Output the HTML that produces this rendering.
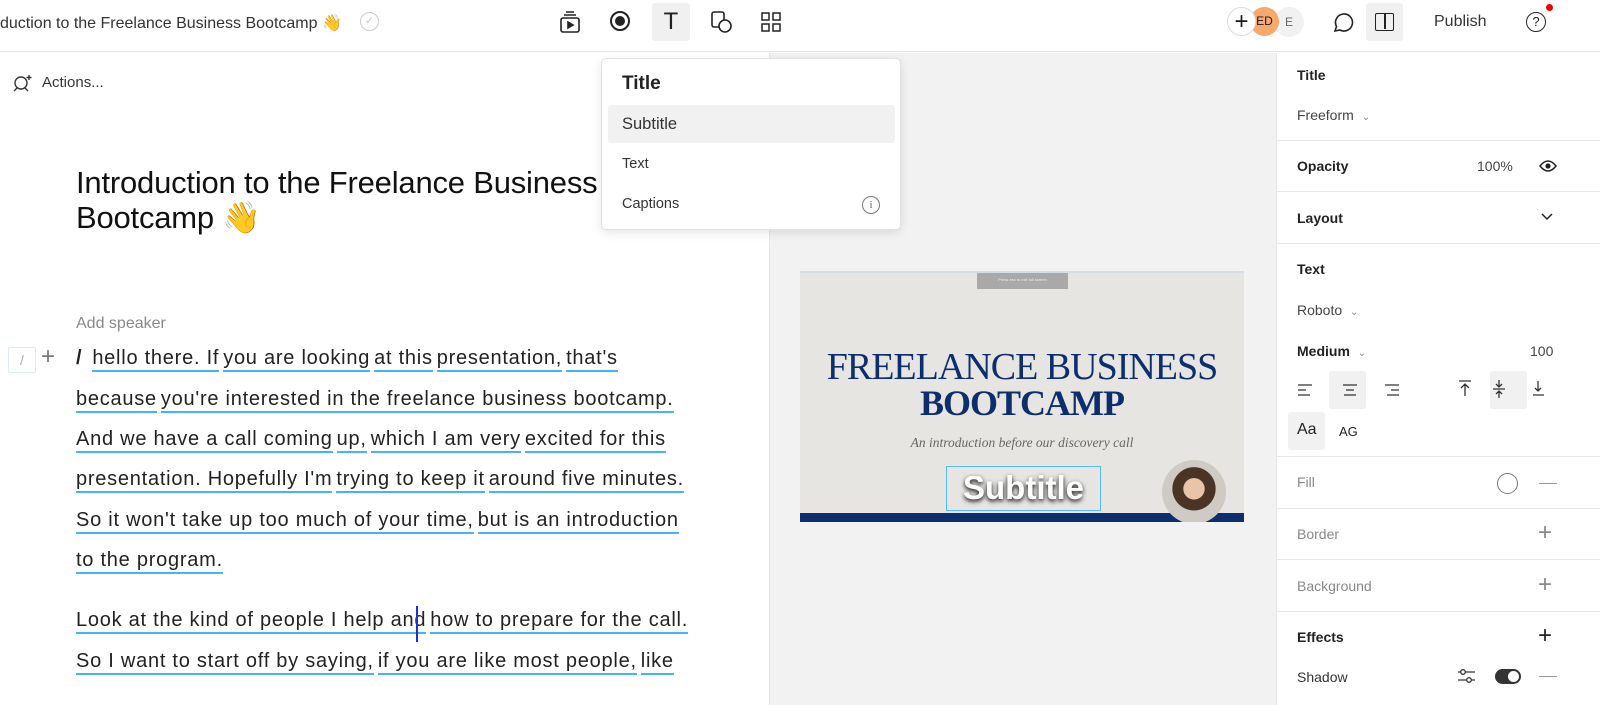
<!DOCTYPE html>
<html><head><meta charset="utf-8"><style>
*{box-sizing:border-box;margin:0;padding:0}
body{width:1600px;height:705px;overflow:hidden;background:#fff;font-family:"Liberation Sans",sans-serif;color:#1a1a1a;position:relative}
.a{position:absolute}
.top{left:0;top:0;width:1600px;height:52px;border-bottom:1px solid #e3e3e3;background:#fff}
.line{position:absolute;left:76px;font-size:20px;letter-spacing:0.75px;color:#222;white-space:nowrap}
.line span{border-bottom:2px solid #45b3f5;padding-bottom:1px;margin-right:4px}
.rp{left:1276px;top:53px;width:324px;height:652px;border-left:1px solid #e5e5e5;background:#fff}
.sec{position:absolute;left:0;width:324px;border-top:1px solid #e8e8e8}
.lbl{position:absolute;left:20px;font-size:14px}
.b{font-weight:bold;color:#222}
.g{color:#888}
</style></head><body>
<div class="a top">
 <div class="a" style="left:0;top:13px;font-size:16px;color:#333;white-space:nowrap">duction to the Freelance Business Bootcamp 👋</div>
 <div class="a" style="left:360px;top:12px;width:19px;height:19px;border:1.5px solid #ccc;border-radius:50%;color:#ccc;font-size:11px;text-align:center;line-height:16px">✓</div>
 <svg class="a" style="left:559px;top:10px" width="22" height="24" viewBox="0 0 22 24" fill="none" stroke="#222" stroke-width="1.6"><path d="M7 2h8M5 5h12"/><rect x="2" y="8" width="18" height="14" rx="2"/><path d="M9 12l5 3-5 3z" fill="#222"/></svg>
 <div class="a" style="left:610px;top:11px;width:20px;height:20px;border:2px solid #222;border-radius:50%"><div style="margin:3px;width:10px;height:10px;background:#222;border-radius:50%"></div></div>
 <div class="a" style="left:652px;top:3px;width:38px;height:38px;background:#f0f0f0;border-radius:3px;font-size:24px;text-align:center;line-height:38px;color:#222;font-weight:300">T</div>
 <svg class="a" style="left:710px;top:10px" width="24" height="24" viewBox="0 0 24 24" fill="none" stroke="#222" stroke-width="1.6"><rect x="2" y="2" width="12" height="15" rx="2"/><circle cx="15" cy="16" r="6" fill="#fff"/></svg>
 <svg class="a" style="left:761px;top:12px" width="20" height="20" viewBox="0 0 20 20" fill="none" stroke="#222" stroke-width="1.5"><rect x="1" y="1" width="7" height="7"/><rect x="12" y="1" width="7" height="7"/><rect x="1" y="12" width="7" height="7"/><rect x="12" y="12" width="7" height="7"/></svg>
 <div class="a" style="left:1227px;top:7px;width:29px;height:29px;border:1px solid #ddd;border-radius:50%;background:#fff;font-size:24px;text-align:center;line-height:27px;z-index:3">+</div>
 <div class="a" style="left:1250px;top:7px;width:29px;height:29px;border-radius:50%;background:#f7a86a;font-size:12px;text-align:center;line-height:29px;z-index:2">ED</div>
 <div class="a" style="left:1274px;top:7px;width:30px;height:30px;border-radius:50%;background:#f1f1f1;font-size:12px;color:#666;text-align:center;line-height:30px">E</div>
 <svg class="a" style="left:1332px;top:11px" width="22" height="22" viewBox="0 0 22 22" fill="none" stroke="#222" stroke-width="1.6"><path d="M3 20l1.5-4.5A8.5 8.5 0 1 1 8 19z"/></svg>
 <div class="a" style="left:1366px;top:3px;width:37px;height:38px;background:#f0f0f0;border-radius:3px"><div style="margin:10px 9px;width:19px;height:18px;border:1.7px solid #222;border-radius:2px;position:relative"><div style="position:absolute;left:8px;top:0;width:1.7px;height:15px;background:#222"></div></div></div>
 <div class="a" style="left:1434px;top:13px;font-size:16px;color:#333">Publish</div>
 <div class="a" style="left:1526px;top:12px;width:20px;height:20px;border:1.6px solid #222;border-radius:50%;font-size:13px;text-align:center;line-height:17px">?</div>
 <div class="a" style="left:1546px;top:4px;width:7px;height:7px;background:#e00;border-radius:50%"></div>
</div>

<svg class="a" style="left:12px;top:73px" width="22" height="20" viewBox="0 0 22 20" fill="none" stroke="#333" stroke-width="1.4"><circle cx="9" cy="10" r="6"/><path d="M5 15l-3 3M13 15l3 3M17 2v5M14.5 4.5h5"/></svg>
<div class="a" style="left:42px;top:74px;font-size:15px;color:#333">Actions...</div>
<div class="a" style="left:76px;top:165px;font-size:31px;line-height:35px;color:#111;letter-spacing:-0.2px;white-space:nowrap">Introduction to the Freelance Business<br>Bootcamp 👋</div>
<div class="a" style="left:76px;top:315px;font-size:16px;color:#888">Add speaker</div>
<div class="a" style="left:8px;top:347px;width:28px;height:26px;border:1px solid #d8ecfa;border-radius:2px;color:#aaa;text-align:center;line-height:24px;font-size:14px">/</div>
<div class="a" style="left:41px;top:343px;font-size:24px;color:#777;font-weight:300">+</div>
<div class="line" style="top:347px"><b style="margin-right:10px">/</b><span>hello there. If</span><span>you are looking</span><span>at this</span><span>presentation,</span><span>that's</span></div>
<div class="line" style="top:388px"><span>because</span><span>you're interested in the freelance business bootcamp.</span></div>
<div class="line" style="top:428px"><span>And we have a call coming</span><span>up,</span><span>which I am very</span><span>excited for this</span></div>
<div class="line" style="top:468px"><span>presentation. Hopefully I'm</span><span>trying to keep it</span><span>around five minutes.</span></div>
<div class="line" style="top:509px"><span>So it won't take up too much of your time,</span><span>but is an introduction</span></div>
<div class="line" style="top:549px"><span>to the program.</span></div>
<div class="line" style="top:609px"><span>Look at the kind of people I help and</span><span>how to prepare for the call.</span></div>
<div class="a" style="left:416px;top:606px;width:2px;height:36px;background:#1c2fd0"></div>
<div class="line" style="top:650px"><span>So I want to start off by saying,</span><span>if you are like most people,</span><span>like</span></div>

<div class="a" style="left:769px;top:53px;width:507px;height:652px;background:#f2f2f2;border-left:1px solid #e5e5e5"></div>
<div class="a" style="left:800px;top:271px;width:444px;height:251px;background:#e6e5e2;overflow:hidden;border-top:2px solid #d6dde3">
 <div class="a" style="left:177px;top:0;width:91px;height:16px;background:#a9a9a9;font-size:4px;color:#eee;text-align:center;line-height:14px">Press esc to exit full screen</div>
 <div class="a" style="left:0;top:76px;width:444px;text-align:center;font-family:'Liberation Serif',serif;color:#0d2e6e;font-size:38px;line-height:36px;letter-spacing:-1px">FREELANCE BUSINESS<br><b style="font-size:36px">BOOTCAMP</b></div>
 <div class="a" style="left:0;top:162px;width:444px;text-align:center;font-family:'Liberation Serif',serif;font-style:italic;color:#666;font-size:13.5px">An introduction before our discovery call</div>
 <div class="a" style="left:146px;top:193px;width:155px;height:45px;border:1.5px solid #57baf7;text-align:center;color:#fff;font-size:33px;font-weight:bold;line-height:42px;text-shadow:0 2px 5px #000">Subtitle</div>
 <div class="a" style="left:0;top:240px;width:444px;height:11px;background:#0d2e6e"></div>
 <div class="a" style="left:362px;top:187px;width:64px;height:64px;border-radius:50%;background:radial-gradient(circle at 50% 45%,#e9c4a9 0 22%,#4a3426 23% 45%,#cfcac3 46%)"></div>
</div>

<div class="a" style="left:601px;top:58px;width:300px;height:172px;background:#fff;border:1px solid #e2e2e2;border-radius:5px;box-shadow:0 3px 10px rgba(0,0,0,.1)">
 <div class="a" style="left:20px;top:14px;font-size:19px;font-weight:bold;color:#222">Title</div>
 <div class="a" style="left:6px;top:46px;width:287px;height:38px;background:#f1f1f1;border-radius:3px"></div>
 <div class="a" style="left:20px;top:56px;font-size:16.5px;color:#333">Subtitle</div>
 <div class="a" style="left:20px;top:97px;font-size:14.5px;color:#333">Text</div>
 <div class="a" style="left:20px;top:137px;font-size:14.5px;color:#333">Captions</div>
 <div class="a" style="left:260px;top:137px;width:18px;height:18px;border:1px solid #777;border-radius:50%;font-size:11px;text-align:center;line-height:16px;color:#666;font-family:'Liberation Serif',serif">i</div>
</div>

<div class="a rp">
 <div class="lbl b" style="top:14px">Title</div>
 <div class="lbl" style="top:54px;color:#444">Freeform <span style="color:#888;font-size:10px;margin-left:4px">⌄</span></div>
 <div class="sec" style="top:87px"></div>
 <div class="lbl b" style="top:105px">Opacity</div>
 <div class="a" style="left:200px;top:105px;font-size:14px;color:#444">100%</div>
 <svg class="a" style="left:262px;top:106px" width="18" height="14" viewBox="0 0 18 14"><path d="M1 7Q9-3 17 7Q9 17 1 7z" fill="none" stroke="#222" stroke-width="1.5"/><circle cx="9" cy="7" r="2.6" fill="#222"/></svg>
 <div class="sec" style="top:138px"></div>
 <div class="lbl b" style="top:157px">Layout</div>
 <svg class="a" style="left:264px;top:160px" width="12" height="8" viewBox="0 0 12 8" fill="none" stroke="#222" stroke-width="1.5"><path d="M1 1l5 5 5-5"/></svg>
 <div class="sec" style="top:190px"></div>
 <div class="lbl b" style="top:208px">Text</div>
 <div class="lbl" style="top:249px;color:#444">Roboto <span style="color:#888;font-size:10px;margin-left:4px">⌄</span></div>
 <div class="lbl b" style="top:290px">Medium <span style="color:#888;font-size:10px;margin-left:4px;font-weight:normal">⌄</span></div>
 <div class="a" style="left:253px;top:290px;font-size:14px;color:#444">100</div>
 <div class="a" style="left:52px;top:318px;width:37px;height:38px;background:#f1f1f1;border-radius:3px"></div>
 <div class="a" style="left:213px;top:318px;width:37px;height:38px;background:#f1f1f1;border-radius:3px"></div>
 <div class="a" style="left:11px;top:359px;width:37px;height:38px;background:#f1f1f1;border-radius:3px"></div>
 <svg class="a" style="left:20px;top:330px;" width="120" height="14" viewBox="0 0 120 14" fill="none" stroke="#333" stroke-width="1.3"><path d="M1 2h14M1 7h8M1 12h12M46 2h14M49 7h8M47 12h12M88 2h14M94 7h8M90 12h12"/></svg>
 <svg class="a" style="left:180px;top:326px;" width="100" height="20" viewBox="0 0 100 20" fill="none" stroke="#333" stroke-width="1.3"><path d="M2 2h12M8 5v12M4 9l4-4 4 4M42 1v7M39 5l3 3 3-3M36 10h12M42 19v-7M39 15l3-3 3 3M81 2v10M78 9l3 3 3-3M76 16h11"/></svg>
 <div class="a" style="left:20px;top:368px;font-size:16px;color:#222">Aa</div>
 <div class="a" style="left:62px;top:371px;font-size:13px;color:#222">AG</div>
 <div class="sec" style="top:403px"></div>
 <div class="lbl g" style="top:421px">Fill</div>
 <div class="a" style="left:220px;top:420px;width:21px;height:21px;border:1.3px solid #777;border-radius:50%"></div>
 <div class="a" style="left:262px;top:430px;width:18px;height:1.3px;background:#999"></div>
 <div class="sec" style="top:455px"></div>
 <div class="lbl g" style="top:473px">Border</div>
 <div class="a" style="left:261px;top:466px;font-size:24px;color:#888;font-weight:300">+</div>
 <div class="sec" style="top:506px"></div>
 <div class="lbl g" style="top:525px">Background</div>
 <div class="a" style="left:261px;top:518px;font-size:24px;color:#888;font-weight:300">+</div>
 <div class="sec" style="top:558px"></div>
 <div class="lbl b" style="top:576px;font-weight:600">Effects</div>
 <div class="a" style="left:261px;top:569px;font-size:24px;color:#222;font-weight:300">+</div>
 <div class="lbl" style="top:616px;color:#333">Shadow</div>
 <svg class="a" style="left:180px;top:615px" width="18" height="16" viewBox="0 0 18 16" fill="none" stroke="#333" stroke-width="1.3"><path d="M1 4h17M1 12h17"/><circle cx="6" cy="4" r="2.3" fill="#fff"/><circle cx="12" cy="12" r="2.3" fill="#fff"/></svg>
 <div class="a" style="left:218px;top:616px;width:26px;height:15px;border-radius:8px;background:#333"><div style="margin:2px 0 0 13px;width:11px;height:11px;border-radius:50%;background:#fff"></div></div>
 <div class="a" style="left:262px;top:623px;width:18px;height:1.3px;background:#999"></div>
</div>
</body></html>
